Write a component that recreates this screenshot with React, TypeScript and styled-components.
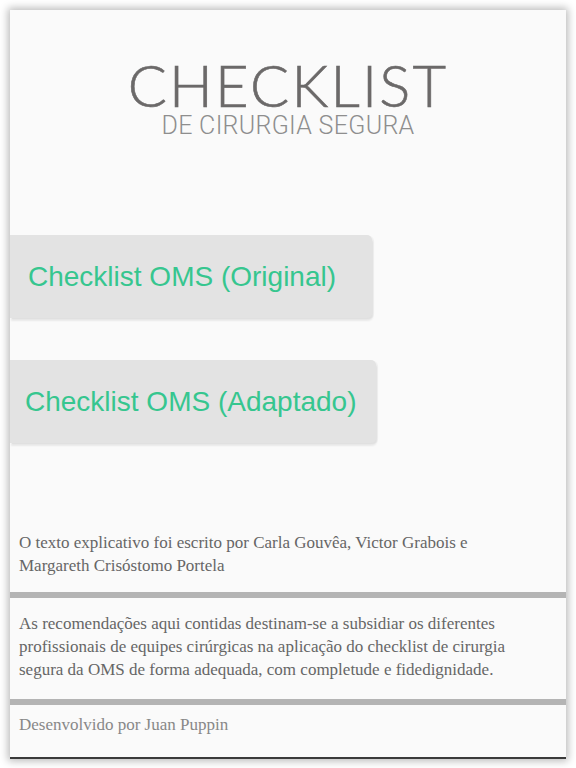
import * as React from "react";
import styled, { createGlobalStyle } from "styled-components";

const panelGrey = "#fafafa";
const titleGrey = "#6b6969";
const subtitleGrey = "#8e8e8e";
const buttonGrey = "#e3e3e3";
const green = "#36c68f";
const textGrey = "#666";
const dividerGrey = "#b4b4b4";

const GlobalStyle = createGlobalStyle`
  html, body {
    margin: 0;
    padding: 0;
    background: #ffffff;
  }
`;

const Panel = styled.div`
  width: 556px;
  margin: 10px;
  background-color: ${panelGrey};
  box-shadow: 0 0 8px 2px rgba(0, 0, 0, 0.28);
  display: flex;
  flex-direction: column;
  border-bottom: 2px solid #3a3a3a;
`;

const Logo = styled.div`
  display: flex;
  flex-direction: column;
  align-items: center;
  padding-top: 47px;
  height: 181px;
  box-sizing: border-box;
`;

const Title = styled.div`
  font-family: "Lato", "Open Sans", sans-serif;
  font-weight: 300;
  font-size: 58px;
  line-height: 56px;
  color: ${titleGrey};
  letter-spacing: 2.2px;
  -webkit-text-stroke: 0.6px ${titleGrey};
`;

const Subtitle = styled.div`
  font-family: "Roboto", "Liberation Sans", sans-serif;
  font-weight: 300;
  font-size: 25px;
  line-height: 25px;
  color: ${subtitleGrey};
  letter-spacing: 0.3px;
`;

const Buttons = styled.div`
  display: flex;
  flex-direction: column;
  gap: 42px;
  padding-top: 44px;
`;

const MenuButton = styled.button<{ width: number; padLeft: number }>`
  width: ${(p) => p.width}px;
  height: 83px;
  box-sizing: border-box;
  padding: 0 0 0 ${(p) => p.padLeft}px;
  text-align: left;
  background-color: ${buttonGrey};
  border: none;
  border-radius: 0 5px 5px 0;
  box-shadow: 1px 3px 2px rgba(0, 0, 0, 0.07), 2px 1px 1px rgba(0, 0, 0, 0.04);
  font-family: "Liberation Sans", Arial, sans-serif;
  font-size: 28px;
  color: ${green};
  cursor: pointer;
`;

const Section = styled.div<{ top: number; bottom: number; color?: string }>`
  padding: ${(p) => p.top}px 30px ${(p) => p.bottom}px 9px;
  font-family: "Liberation Serif", "Times New Roman", serif;
  font-size: 17px;
  line-height: 23px;
  color: ${(p) => p.color ?? textGrey};
`;

const Divider = styled.div`
  height: 6px;
  background-color: ${dividerGrey};
`;

export default function App() {
  return (
    <>
      <GlobalStyle />
      <Panel>
        <Logo>
          <Title>CHECKLIST</Title>
          <Subtitle>DE CIRURGIA SEGURA</Subtitle>
        </Logo>
        <Buttons>
          <MenuButton width={362} padLeft={18}>
            Checklist OMS (Original)
          </MenuButton>
          <MenuButton width={366} padLeft={15}>
            Checklist OMS (Adaptado)
          </MenuButton>
        </Buttons>
        <Section top={88} bottom={15}>
          O texto explicativo foi escrito por Carla Gouvêa, Victor Grabois e
          Margareth Crisóstomo Portela
        </Section>
        <Divider />
        <Section top={14} bottom={18}>
          As recomendações aqui contidas destinam-se a subsidiar os diferentes
          profissionais de equipes cirúrgicas na aplicação do checklist de
          cirurgia segura da OMS de forma adequada, com completude e
          fidedignidade.
        </Section>
        <Divider />
        <Section top={8} bottom={21} color="#888">
          Desenvolvido por Juan Puppin
        </Section>
      </Panel>
    </>
  );
}
